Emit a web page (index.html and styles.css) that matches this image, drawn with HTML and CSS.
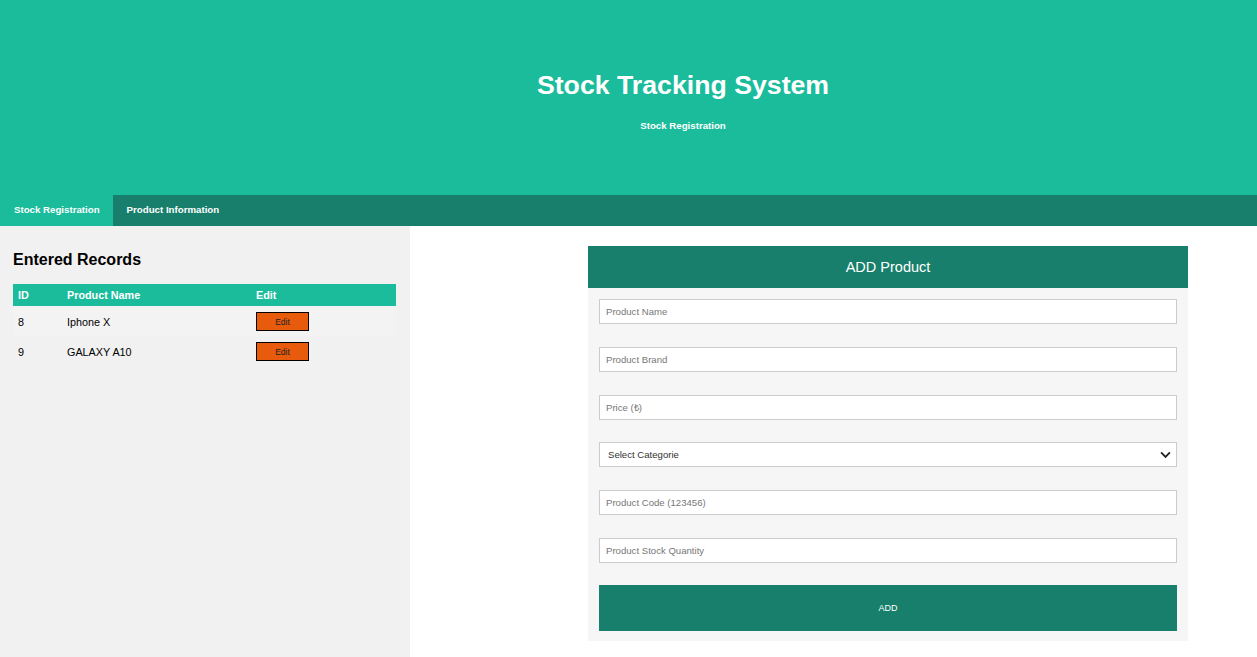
FILE: index.html
```html
<!DOCTYPE html>
<html>
<head>
<meta charset="utf-8">
<link rel="stylesheet" href="styles.css">
</head>
<body>
<div class="page">
<header class="hero">
  <h1 class="hero-title">Stock Tracking System</h1>
  <p class="hero-sub">Stock Registration</p>
</header>
<nav class="nav">
  <a class="nav-tab active">Stock Registration</a>
  <a class="nav-tab">Product Information</a>
</nav>
<main class="main">
  <section class="records">
    <h2 class="records-title">Entered Records</h2>
    <table class="rtable">
      <thead>
        <tr><th class="c-id">ID</th><th class="c-name">Product Name</th><th>Edit</th></tr>
      </thead>
      <tbody>
        <tr class="r1"><td>8</td><td>Iphone X</td><td><button class="edit-btn">Edit</button></td></tr>
        <tr><td>9</td><td>GALAXY A10</td><td><button class="edit-btn">Edit</button></td></tr>
      </tbody>
    </table>
  </section>
  <section class="formarea">
    <div class="card">
      <div class="card-head">ADD Product</div>
      <form class="card-body">
        <input class="field" placeholder="Product Name">
        <input class="field" placeholder="Product Brand">
        <input class="field" placeholder="Price (₺)">
        <div class="select-wrap">
          <select class="field select"><option>Select Categorie</option></select>
          <svg class="chev" viewBox="0 0 12 8" width="11" height="8"><path d="M1.2 1.2 L6 6 L10.8 1.2" fill="none" stroke="#222" stroke-width="2"/></svg>
        </div>
        <input class="field" placeholder="Product Code (123456)">
        <input class="field" placeholder="Product Stock Quantity">
        <button type="button" class="add-btn">ADD</button>
      </form>
    </div>
  </section>
</main>
</div>
</body>
</html>
```
FILE: styles.css
```css
* { box-sizing: border-box; }
html, body { margin: 0; padding: 0; height: 100%; }
body {
  font-family: "Liberation Sans", Arial, sans-serif;
  background: #fff;
  overflow: hidden;
}
.page {
  width: 100%;
  height: 100%;
}
.hero {
  background: #1abc9c;
  height: 195px;
  color: #fff;
  text-align: center;
  padding: 69px 0 0 109px;
}
.hero-title {
  margin: 0;
  font-size: 26.7px;
  font-weight: bold;
  line-height: 32px;
}
.hero-sub {
  margin: 19px 0 0;
  font-size: 9.7px;
  font-weight: bold;
  line-height: 12px;
}
.nav {
  display: flex;
  background: #177f6b;
  height: 31px;
}
.nav-tab {
  color: #fff;
  font-size: 9.7px;
  font-weight: bold;
  padding: 0 13px 0 14px;
  line-height: 30px;
}
.nav-tab.active { background: #1abc9c; }
.main {
  display: flex;
  height: calc(100% - 226px);
}
.records {
  width: 410px;
  flex: none;
  background: #f1f1f1;
  padding: 24px 14px 0 13px;
}
.records-title {
  margin: 0 0 14px;
  font-size: 16px;
  line-height: 20px;
  font-weight: bold;
  color: #000;
}
.rtable {
  width: 383px;
  border-collapse: collapse;
  font-size: 10.8px;
}
.rtable th {
  background: #1abc9c;
  color: #fff;
  text-align: left;
  height: 22px;
  padding: 0 0 0 5px;
  font-weight: bold;
}
.c-id { width: 49px; }
.c-name { width: 189px; }
.rtable td {
  padding: 1px 0 0 5px;
  height: 30px;
  color: #000;
}
.r1 td { background: #f3f3f3; }
.edit-btn {
  width: 53px;
  height: 19px;
  background: #e85a0c;
  border: 1px solid #000;
  font-family: "Liberation Sans", Arial, sans-serif;
  font-size: 8.5px;
  color: #222;
  padding: 0;
}
.formarea {
  flex: 1;
  padding: 20px 0 0 178px;
}
.card {
  width: 600px;
  background: #f6f6f6;
}
.card-head {
  background: #177f6b;
  color: #fff;
  height: 42px;
  line-height: 42px;
  text-align: center;
  font-size: 14.5px;
}
.card-body {
  padding: 11px 11px 10px;
  display: flex;
  flex-direction: column;
  gap: 22.8px;
  margin: 0;
}
.field {
  width: 578px;
  height: 25px;
  border: 1px solid #ccc;
  background: #fff;
  padding: 0 6px;
  font-family: "Liberation Sans", Arial, sans-serif;
  font-size: 9.6px;
  color: #333;
  display: block;
  margin: 0;
}
.field::placeholder { color: #777; }
.select-wrap { position: relative; }
.select {
  appearance: none;
  -webkit-appearance: none;
  padding-left: 8px;
  color: #333;
  border-radius: 0;
}
.chev {
  position: absolute;
  right: 6px;
  top: 9px;
  pointer-events: none;
}
.add-btn {
  width: 578px;
  height: 46px;
  background: #177f6b;
  border: 0;
  color: #fff;
  font-family: "Liberation Sans", Arial, sans-serif;
  font-size: 9px;
  margin-top: -0.8px;
}
```
